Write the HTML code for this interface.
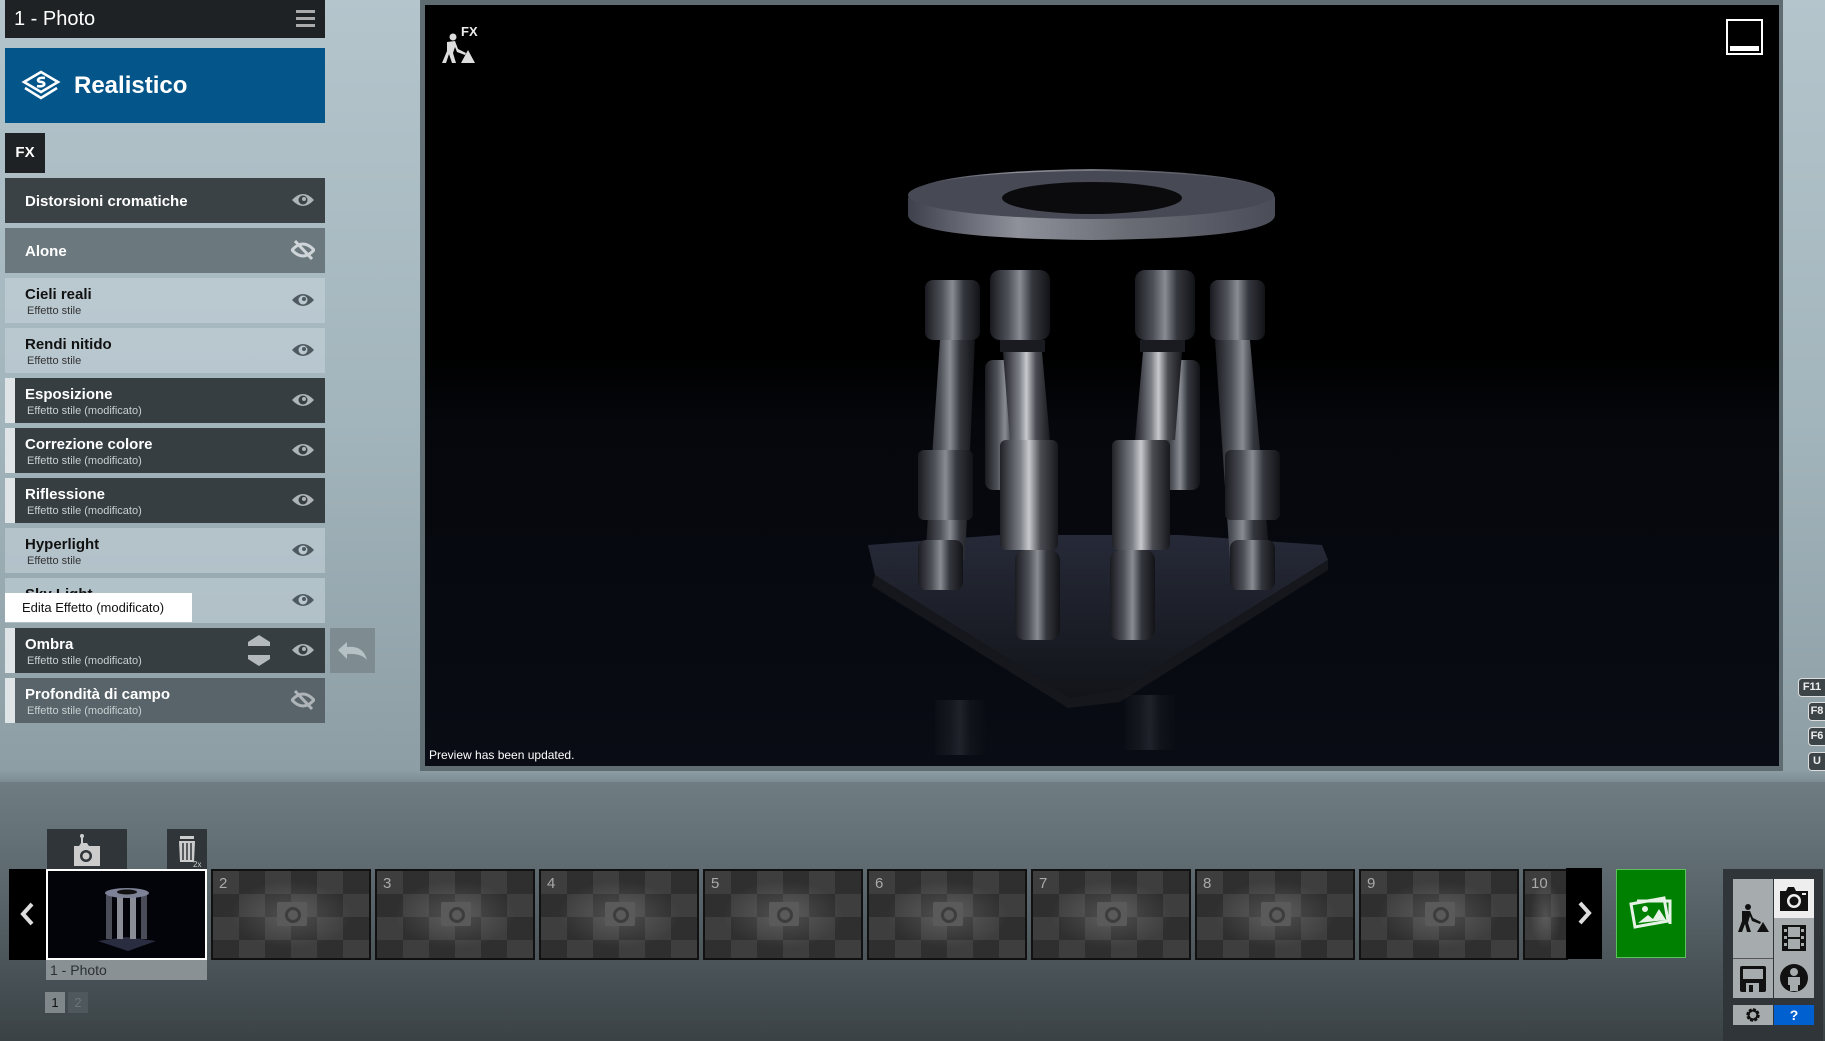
<!DOCTYPE html>
<html><head><meta charset="utf-8">
<style>
*{margin:0;padding:0;box-sizing:border-box}
body{width:1825px;height:1041px;overflow:hidden;position:relative;font-family:"Liberation Sans",sans-serif;
background:linear-gradient(180deg,#b4c5cc 0%,#a3b5bc 40%,#8d9ea5 74%,#7d8c92 75.1%);}
.bot{position:absolute;left:0;top:782px;width:1825px;height:259px;background:linear-gradient(180deg,#6f7d83 0%,#58646a 45%,#3a4245 100%)}
.abs{position:absolute}
.row{position:absolute;left:5px;width:320px;height:45px}
.row .t{position:absolute;left:20px;top:8px;font-size:15px;font-weight:bold}
.row .t1{top:15px}
.row .s{position:absolute;left:22px;top:27px;font-size:11px}
.row svg{position:absolute;right:10px;top:12px}
.dark{background:#3a4246;color:#fff}
.dark .s{color:#c9d0d3}
.mid{background:#6b797f;color:#fff}
.light{background:rgba(200,214,220,.55);color:#111}
.light .s{color:#333}
.mod{background:#dfe4e6}
.mod .in{position:absolute;left:10px;top:0;right:0;bottom:0;background:#363e42}
.mod.grey .in{background:#58646a}
.mod .t,.mod .s{color:#fff}
.mod .s{color:#c9d0d3}
.thumb{position:absolute;top:869px;width:160px;height:91px;border:2px solid #111;
background:
radial-gradient(ellipse at 50% 50%,rgba(255,255,255,.16),rgba(0,0,0,0) 55%),
repeating-conic-gradient(#2f2f2f 0 25%,#3e3e3e 0 50%) 0 0/52px 46px;}
.thumb span{position:absolute;left:6px;top:4px;color:#aaa;font-size:15px}
.thumb i{position:absolute;left:64px;top:31px;width:30px;height:24px;background:#5a5a5a;border-radius:2px}
.thumb i:before{content:"";position:absolute;left:8px;top:5px;width:10px;height:10px;border:3px solid #3d3d3d;border-radius:50%}
.fk{position:absolute;border:1.5px solid #ddd;border-right:none;border-radius:4px 0 0 4px;background:#3c4447;color:#eee;font-size:11px;font-weight:bold;text-align:center;line-height:16px}
</style></head><body>
<div class="bot"></div>

<div class="abs" style="left:5px;top:0;width:320px;height:38px;background:#1e2224;color:#fff;font-size:20px;line-height:38px;padding-left:9px">1 - Photo
<div class="abs" style="right:10px;top:10px;width:19px;height:3px;background:#aaa;box-shadow:0 7px 0 #aaa,0 14px 0 #aaa"></div></div>

<div class="abs" style="left:5px;top:48px;width:320px;height:75px;background:#04568a;color:#fff;font-size:24px;font-weight:bold;line-height:75px;padding-left:69px">Realistico
<svg class="abs" style="left:16px;top:22px" width="40" height="32" viewBox="0 0 40 32"><g fill="none" stroke="#fff" stroke-width="2.6"><path d="M20 2 L37 12 L20 22 L3 12 Z"/><path d="M4 18 L20 28 L36 18"/><path d="M24 8 Q18 7 17 10 Q17 12 21 12 Q24 13 23 15 Q21 17 16 16"/></g></svg></div>

<div class="abs" style="left:5px;top:133px;width:40px;height:40px;background:#1e2224;color:#fff;font-size:15px;font-weight:bold;line-height:40px;text-align:center">FX</div>

<div class="row dark" style="top:178px"><div class="t t1">Distorsioni cromatiche</div><svg width="24" height="20" viewBox="0 0 24 20"><path d="M1 10 Q12 -2 23 10 Q12 22 1 10Z" fill="#aeb4b7"/><circle cx="12" cy="10" r="4.5" fill="#3a4246"/><circle cx="13" cy="9" r="2" fill="#aeb4b7"/></svg></div>
<div class="row mid" style="top:228px"><div class="t t1">Alone</div><svg width="24" height="20" viewBox="0 0 24 20"><path d="M1 10 Q12 -2 23 10 Q12 22 1 10Z" fill="none" stroke="#cfd5d8" stroke-width="3"/><path d="M4 1 L21 19" stroke="#cfd5d8" stroke-width="3"/></svg></div>
<div class="row light" style="top:278px"><div class="t">Cieli reali</div><div class="s">Effetto stile</div><svg width="24" height="20" viewBox="0 0 24 20"><path d="M1 10 Q12 -2 23 10 Q12 22 1 10Z" fill="#4e5a5f"/><circle cx="12" cy="10" r="4.5" fill="#b9c9cf"/><circle cx="13" cy="9" r="2" fill="#4e5a5f"/></svg></div>
<div class="row light" style="top:328px"><div class="t">Rendi nitido</div><div class="s">Effetto stile</div><svg width="24" height="20" viewBox="0 0 24 20"><path d="M1 10 Q12 -2 23 10 Q12 22 1 10Z" fill="#4e5a5f"/><circle cx="12" cy="10" r="4.5" fill="#b9c9cf"/><circle cx="13" cy="9" r="2" fill="#4e5a5f"/></svg></div>
<div class="row mod" style="top:378px"><div class="in"></div><div class="t">Esposizione</div><div class="s">Effetto stile (modificato)</div><svg width="24" height="20" viewBox="0 0 24 20"><path d="M1 10 Q12 -2 23 10 Q12 22 1 10Z" fill="#aeb4b7"/><circle cx="12" cy="10" r="4.5" fill="#363e42"/><circle cx="13" cy="9" r="2" fill="#aeb4b7"/></svg></div>
<div class="row mod" style="top:428px"><div class="in"></div><div class="t">Correzione colore</div><div class="s">Effetto stile (modificato)</div><svg width="24" height="20" viewBox="0 0 24 20"><path d="M1 10 Q12 -2 23 10 Q12 22 1 10Z" fill="#aeb4b7"/><circle cx="12" cy="10" r="4.5" fill="#363e42"/><circle cx="13" cy="9" r="2" fill="#aeb4b7"/></svg></div>
<div class="row mod" style="top:478px"><div class="in"></div><div class="t">Riflessione</div><div class="s">Effetto stile (modificato)</div><svg width="24" height="20" viewBox="0 0 24 20"><path d="M1 10 Q12 -2 23 10 Q12 22 1 10Z" fill="#aeb4b7"/><circle cx="12" cy="10" r="4.5" fill="#363e42"/><circle cx="13" cy="9" r="2" fill="#aeb4b7"/></svg></div>
<div class="row light" style="top:528px"><div class="t">Hyperlight</div><div class="s">Effetto stile</div><svg width="24" height="20" viewBox="0 0 24 20"><path d="M1 10 Q12 -2 23 10 Q12 22 1 10Z" fill="#4e5a5f"/><circle cx="12" cy="10" r="4.5" fill="#b9c9cf"/><circle cx="13" cy="9" r="2" fill="#4e5a5f"/></svg></div>
<div class="row light" style="top:578px;overflow:hidden"><div class="t">Sky Light</div><svg width="24" height="20" viewBox="0 0 24 20"><path d="M1 10 Q12 -2 23 10 Q12 22 1 10Z" fill="#4e5a5f"/><circle cx="12" cy="10" r="4.5" fill="#b9c9cf"/><circle cx="13" cy="9" r="2" fill="#4e5a5f"/></svg></div>
<div class="abs" style="left:5px;top:593px;width:187px;height:29px;background:#fff;color:#111;font-size:13px;line-height:29px;padding-left:17px">Edita Effetto (modificato)</div>
<div class="row mod" style="top:628px"><div class="in"></div><div class="t">Ombra</div><div class="s">Effetto stile (modificato)</div>
<svg style="right:55px;top:6px" width="22" height="33" viewBox="0 0 22 33"><path d="M0 12 L0 8 L11 1 L22 8 L22 12Z M0 21 L22 21 L22 25 L11 32 L0 25Z" fill="#b3b9bc"/></svg>
<svg width="24" height="20" viewBox="0 0 24 20"><path d="M1 10 Q12 -2 23 10 Q12 22 1 10Z" fill="#aeb4b7"/><circle cx="12" cy="10" r="4.5" fill="#363e42"/><circle cx="13" cy="9" r="2" fill="#aeb4b7"/></svg></div>
<div class="abs" style="left:330px;top:628px;width:45px;height:45px;background:#7e8c92"><svg class="abs" style="left:7px;top:12px" width="32" height="22" viewBox="0 0 32 22"><path d="M1 10 L10 2 L10 7 Q26 5 30 20 Q24 13 10 14 L10 19Z" fill="#b6c1c5"/></svg></div>
<div class="row mod grey" style="top:678px"><div class="in"></div><div class="t">Profondità di campo</div><div class="s">Effetto stile (modificato)</div><svg width="24" height="20" viewBox="0 0 24 20"><path d="M1 10 Q12 -2 23 10 Q12 22 1 10Z" fill="none" stroke="#aeb4b7" stroke-width="3"/><path d="M4 1 L21 19" stroke="#aeb4b7" stroke-width="3"/></svg></div>

<!-- viewport -->
<div class="abs" style="left:420px;top:0;width:1363px;height:771px;background:#5f6c72"></div>
<div class="abs" style="left:425px;top:5px;width:1354px;height:761px;overflow:hidden;background:linear-gradient(180deg,#000 0%,#000 46%,#05070c 55%,#090c14 100%)">
<svg class="abs" style="left:15px;top:18px" width="40" height="42" viewBox="0 0 40 42"><g fill="#ddd"><circle cx="13" cy="14" r="3.5"/><path d="M7 19 L15 18 L18 26 L26 30 L25 32 L17 29 L15 24 L13 30 L16 40 L12 40 L9 31 L6 40 L2 40 L7 28Z"/><path d="M21 40 L28 27 L35 40Z"/></g><text x="21" y="13" fill="#eee" font-size="13" font-weight="bold" font-family="Liberation Sans">FX</text></svg>
<div class="abs" style="left:1301px;top:14px;width:37px;height:36px;border:2px solid #fff"><div class="abs" style="left:2px;bottom:2px;right:2px;height:5px;background:#fff"></div></div>
<svg class="abs" style="left:0;top:0" width="1354" height="761" viewBox="425 5 1354 761">
<defs>
<linearGradient id="met" x1="0" x2="1"><stop offset="0" stop-color="#1a1b20"/><stop offset=".3" stop-color="#4e5058"/><stop offset=".5" stop-color="#8a8c94"/><stop offset=".7" stop-color="#35373e"/><stop offset="1" stop-color="#121317"/></linearGradient>
<linearGradient id="met2" x1="0" x2="1"><stop offset="0" stop-color="#202127"/><stop offset=".35" stop-color="#7e8088"/><stop offset=".5" stop-color="#c8c9ce"/><stop offset=".7" stop-color="#4a4c53"/><stop offset="1" stop-color="#18191d"/></linearGradient>
<linearGradient id="disk" x1="0" x2="1"><stop offset="0" stop-color="#3e414c"/><stop offset=".3" stop-color="#8e909a"/><stop offset=".6" stop-color="#6a6c75"/><stop offset="1" stop-color="#4a4d58"/></linearGradient>
<linearGradient id="base" x1="0" y1="0" x2="0" y2="1"><stop offset="0" stop-color="#262a38"/><stop offset="1" stop-color="#121419"/></linearGradient>
</defs>
<path d="M868 545 L1000 535 L1180 535 L1322 545 L1328 560 L1120 690 L1070 698 L875 575Z" fill="url(#base)"/>
<path d="M875 575 L1070 698 L1120 690 L1328 560 L1328 570 L1120 702 L1068 708 L872 586Z" fill="#15171c"/>
<g opacity=".18"><rect x="935" y="700" width="50" height="55" fill="url(#met)"/><rect x="1125" y="695" width="50" height="55" fill="url(#met)"/></g>
<!-- back legs -->
<g>
<rect x="925" y="280" width="55" height="60" rx="8" fill="url(#met)"/>
<path d="M940 340 L975 340 L965 560 L925 560Z" fill="url(#met)"/>
<rect x="918" y="450" width="55" height="70" rx="6" fill="url(#met)"/>
<rect x="918" y="540" width="45" height="50" rx="8" fill="url(#met)"/>
<rect x="1210" y="280" width="55" height="60" rx="8" fill="url(#met)"/>
<path d="M1215 340 L1250 340 L1270 560 L1230 560Z" fill="url(#met)"/>
<rect x="1225" y="450" width="55" height="70" rx="6" fill="url(#met)"/>
<rect x="1230" y="540" width="45" height="50" rx="8" fill="url(#met)"/>
<rect x="985" y="360" width="40" height="130" rx="8" fill="url(#met)"/>
<rect x="1160" y="360" width="40" height="130" rx="8" fill="url(#met)"/>
</g>
<!-- front legs -->
<g>
<rect x="990" y="270" width="60" height="70" rx="10" fill="url(#met)"/>
<rect x="1000" y="340" width="45" height="12" fill="#1a1b20"/>
<path d="M1003 352 L1042 352 L1050 440 L1010 440Z" fill="url(#met2)"/>
<rect x="1000" y="440" width="58" height="110" rx="6" fill="url(#met2)"/>
<rect x="1015" y="550" width="45" height="90" rx="10" fill="url(#met)"/>
<rect x="1135" y="270" width="60" height="70" rx="10" fill="url(#met)"/>
<rect x="1140" y="340" width="45" height="12" fill="#1a1b20"/>
<path d="M1143 352 L1182 352 L1175 440 L1135 440Z" fill="url(#met2)"/>
<rect x="1112" y="440" width="58" height="110" rx="6" fill="url(#met2)"/>
<rect x="1110" y="550" width="45" height="90" rx="10" fill="url(#met)"/>
</g>
<path d="M908 199 Q908 172 1091 169 Q1275 172 1275 199 L1275 215 Q1275 238 1091 240 Q908 238 908 215Z" fill="url(#disk)"/>
<ellipse cx="1091" cy="195" rx="183" ry="24" fill="#474a55"/>
<ellipse cx="1092" cy="198" rx="90" ry="16" fill="#0b0b0e"/>
</svg>
<div class="abs" style="left:4px;top:743px;color:#fff;font-size:12px">Preview has been updated.</div>
</div>

<div class="fk" style="left:1798px;top:678px;width:27px;height:19px">F11</div>
<div class="fk" style="left:1808px;top:702px;width:17px;height:19px">F8</div>
<div class="fk" style="left:1808px;top:727px;width:17px;height:19px">F6</div>
<div class="fk" style="left:1808px;top:752px;width:17px;height:19px">U</div>

<div class="abs" style="left:47px;top:829px;width:80px;height:42px;background:#2f3538"><svg class="abs" style="left:26px;top:4px" width="28" height="34" viewBox="0 0 28 34"><circle cx="9" cy="3" r="2" fill="#ccc"/><rect x="8" y="4" width="2" height="6" fill="#ccc"/><path d="M1 13 L6 13 L8 10 L14 10 L16 13 L27 13 L27 33 L1 33Z" fill="#ccc"/><circle cx="13" cy="23" r="6" fill="#2f3538"/><circle cx="13" cy="23" r="3.5" fill="#ccc"/></svg></div>
<div class="abs" style="left:167px;top:829px;width:40px;height:42px;background:#2f3538"><svg class="abs" style="left:9px;top:3px" width="26" height="36" viewBox="0 0 26 36"><rect x="4" y="4" width="14" height="3" fill="#ccc"/><path d="M3 9 L19 9 L18 30 L4 30Z" fill="#ccc"/><path d="M7 11 V28 M11 11 V28 M15 11 V28" stroke="#2f3538" stroke-width="1.5"/><text x="17" y="35" font-size="8" fill="#ccc" font-family="Liberation Sans">2x</text></svg></div>

<div class="abs" style="left:9px;top:869px;width:37px;height:91px;background:#000"><svg class="abs" style="left:9px;top:33px" width="18" height="24" viewBox="0 0 18 24"><path d="M14 2 L5 12 L14 22" fill="none" stroke="#ddd" stroke-width="4"/></svg></div>
<div class="abs" style="left:46px;top:869px;width:161px;height:91px;border:2px solid #fff;background:#03040a;overflow:hidden">
<svg width="157" height="87" viewBox="0 0 157 87"><path d="M50 70 L78 66 L108 70 L80 80Z" fill="#2a2d40"/><rect x="58" y="24" width="6" height="44" fill="#4a4c58"/><rect x="69" y="24" width="6" height="44" fill="#8a8c96"/><rect x="82" y="24" width="6" height="44" fill="#8a8c96"/><rect x="93" y="24" width="6" height="44" fill="#4a4c58"/><ellipse cx="79" cy="22" rx="22" ry="5" fill="#7e8296"/><ellipse cx="79" cy="21" rx="10" ry="2.5" fill="#111"/></svg></div>
<div class="abs" style="left:46px;top:960px;width:161px;height:20px;background:#8a9194;color:#2b2f31;font-size:14px;line-height:20px;padding-left:4px">1 - Photo</div>
<div class="abs" style="left:45px;top:992px;width:20px;height:21px;background:#7f878a;color:#111;font-size:13px;text-align:center;line-height:21px">1</div>
<div class="abs" style="left:68px;top:992px;width:20px;height:21px;background:#4f585c;color:#6c7477;font-size:13px;text-align:center;line-height:21px">2</div>

<div class="thumb" style="left:211px"><span>2</span><i></i></div>
<div class="thumb" style="left:375px"><span>3</span><i></i></div>
<div class="thumb" style="left:539px"><span>4</span><i></i></div>
<div class="thumb" style="left:703px"><span>5</span><i></i></div>
<div class="thumb" style="left:867px"><span>6</span><i></i></div>
<div class="thumb" style="left:1031px"><span>7</span><i></i></div>
<div class="thumb" style="left:1195px"><span>8</span><i></i></div>
<div class="thumb" style="left:1359px"><span>9</span><i></i></div>
<div class="thumb" style="left:1523px;width:45px"><span>10</span></div>
<div class="abs" style="left:1566px;top:868px;width:36px;height:91px;background:#000"><svg class="abs" style="left:10px;top:33px" width="18" height="24" viewBox="0 0 18 24"><path d="M4 2 L13 12 L4 22" fill="none" stroke="#ddd" stroke-width="4"/></svg></div>
<div class="abs" style="left:1616px;top:869px;width:70px;height:89px;background:#008000;border:1px solid #5cc05c"><svg class="abs" style="left:11px;top:25px" width="46" height="36" viewBox="0 0 46 36"><g fill="none" stroke="#e6f2e6" stroke-width="3"><path d="M3 9 L36 3 L40 26 L7 32Z"/><path d="M9 6 L42 6 L42 29"/></g><circle cx="17" cy="14" r="3" fill="#e6f2e6"/><path d="M10 28 L20 20 L25 24 L31 14 L38 25Z" fill="#e6f2e6"/></svg></div>

<div class="abs" style="left:1723px;top:869px;width:100px;height:172px;background:#2f3538"></div>
<div class="abs" style="left:1733px;top:879px;width:40px;height:79px;background:#a6acae"><svg class="abs" style="left:4px;top:24px" width="34" height="30" viewBox="0 0 34 30"><g fill="#111"><circle cx="11" cy="4" r="3"/><path d="M5 8 L13 8 L16 15 L24 19 L23 21 L15 18 L13 13 L11 20 L14 29 L10 29 L8 21 L5 29 L1 29 L5 18Z"/><path d="M20 29 L26 19 L32 29Z"/></g></svg></div>
<div class="abs" style="left:1774px;top:879px;width:40px;height:39px;background:#eee"><svg class="abs" style="left:5px;top:7px" width="30" height="26" viewBox="0 0 30 26"><path d="M1 5 L7 5 L9 1 L15 1 L17 5 L29 5 L29 25 L1 25Z" fill="#111"/><circle cx="15" cy="15" r="7" fill="#eee"/><circle cx="15" cy="15" r="4.5" fill="#111"/><rect x="23" y="7" width="4" height="2" fill="#eee"/></svg></div>
<div class="abs" style="left:1774px;top:918px;width:40px;height:40px;background:#a6acae"><svg class="abs" style="left:8px;top:7px" width="24" height="26" viewBox="0 0 24 26"><rect x="1" y="1" width="22" height="24" fill="none" stroke="#111" stroke-width="2"/><rect x="1" y="1" width="5" height="24" fill="#111"/><rect x="18" y="1" width="5" height="24" fill="#111"/><path d="M6 13 H18" stroke="#111" stroke-width="2"/><g fill="#a6acae"><rect x="2" y="4" width="3" height="3"/><rect x="2" y="11" width="3" height="3"/><rect x="2" y="18" width="3" height="3"/><rect x="19" y="4" width="3" height="3"/><rect x="19" y="11" width="3" height="3"/><rect x="19" y="18" width="3" height="3"/></g></svg></div>
<div class="abs" style="left:1733px;top:958px;width:40px;height:40px;background:#a6acae;border-top:1px solid #555"><svg class="abs" style="left:6px;top:6px" width="28" height="28" viewBox="0 0 28 28"><path d="M1 3 Q1 1 3 1 L25 1 Q27 1 27 3 L27 25 Q27 27 25 27 L3 27 Q1 27 1 25Z" fill="#111"/><rect x="4" y="4" width="20" height="10" fill="#a6acae"/><rect x="7" y="18" width="13" height="9" fill="#a6acae"/><rect x="10" y="20" width="4" height="7" fill="#111"/></svg></div>
<div class="abs" style="left:1774px;top:958px;width:40px;height:40px;background:#a6acae"><svg class="abs" style="left:5px;top:5px" width="30" height="30" viewBox="0 0 30 30"><circle cx="15" cy="15" r="14" fill="#111"/><circle cx="15" cy="9" r="4" fill="#a6acae"/><path d="M9 14 L21 14 L21 22 L19 22 L19 28 L11 28 L11 22 L9 22Z" fill="#a6acae"/></svg></div>
<div class="abs" style="left:1733px;top:1005px;width:40px;height:20px;background:#a6acae"><svg class="abs" style="left:12px;top:2px" width="16" height="16" viewBox="0 0 16 16"><circle cx="8" cy="8" r="5" fill="none" stroke="#111" stroke-width="3.5" stroke-dasharray="2.6 1.3"/><circle cx="8" cy="8" r="4.5" fill="none" stroke="#111" stroke-width="2"/></svg></div>
<div class="abs" style="left:1774px;top:1005px;width:40px;height:20px;background:#0060d0;color:#fff;font-weight:bold;font-size:14px;text-align:center;line-height:20px">?</div>
</body></html>
